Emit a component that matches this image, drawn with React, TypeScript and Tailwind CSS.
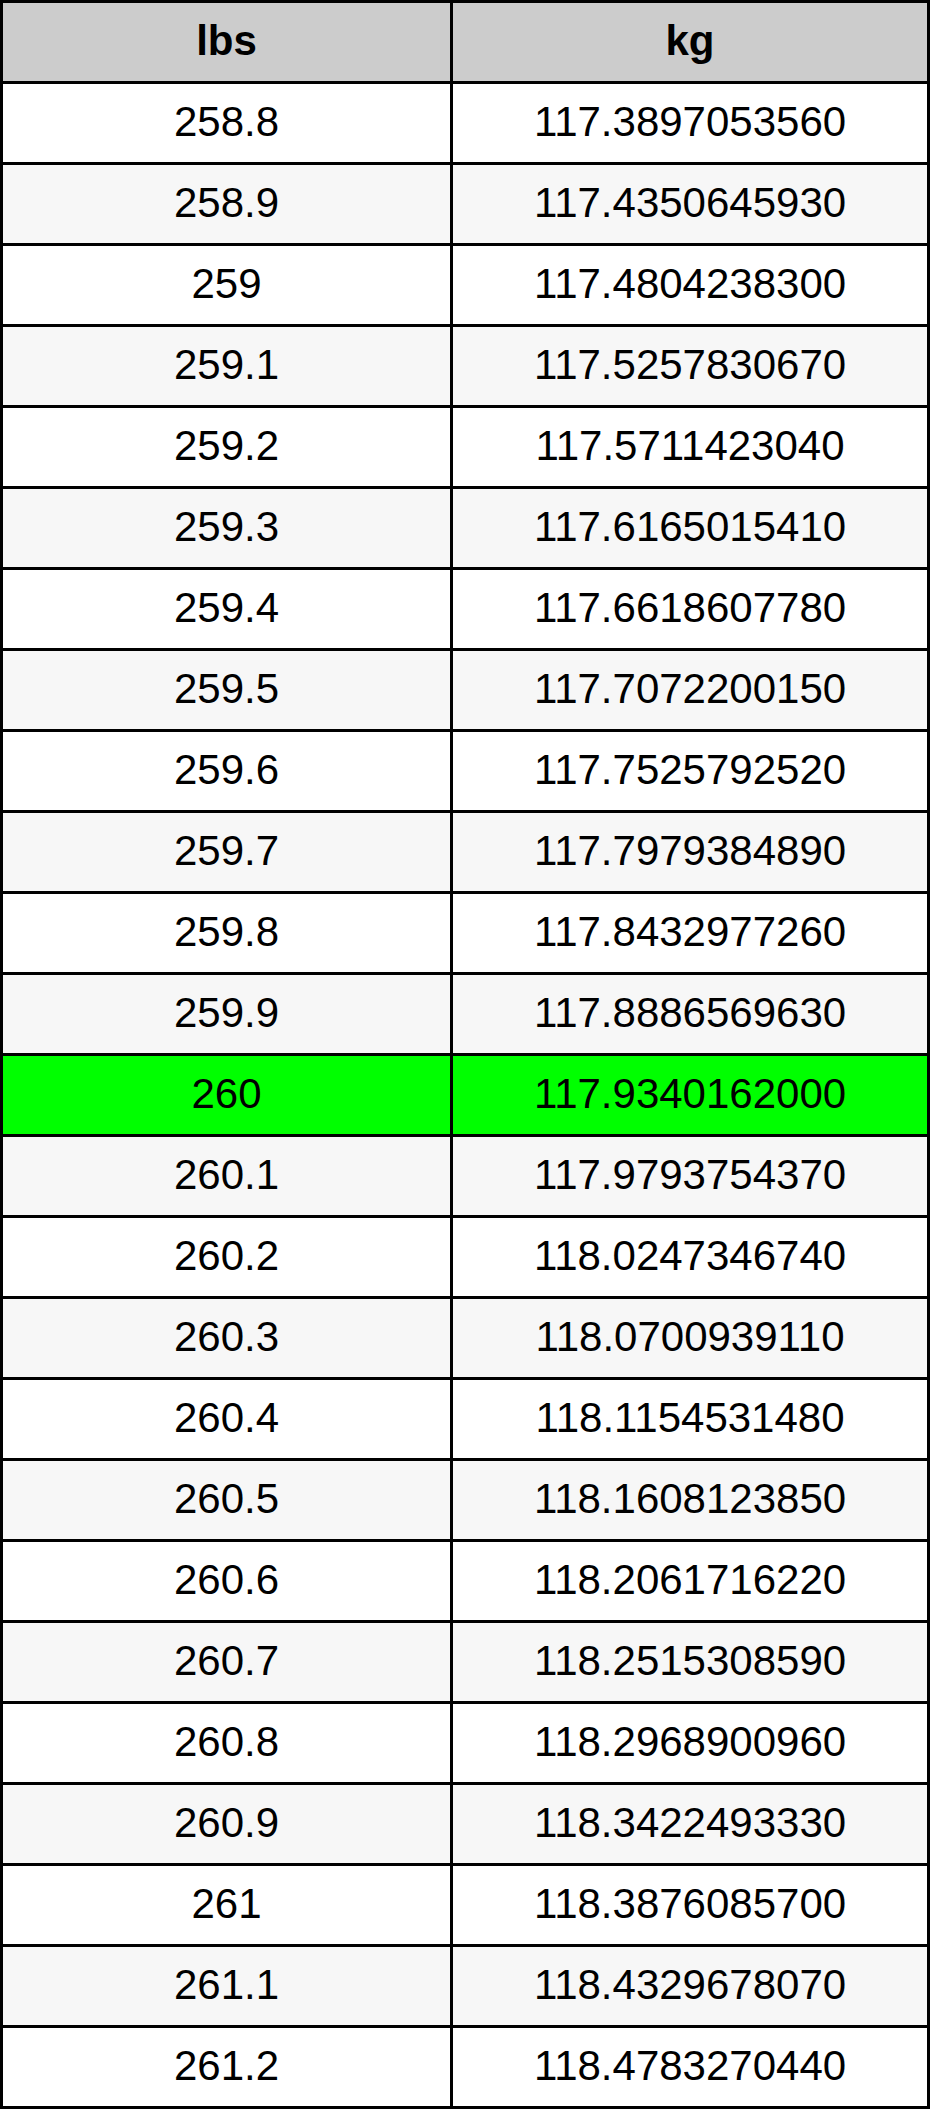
import React from 'react';

type Row = { lbs: string; kg: string };

const ROWS: Row[] = [
  { lbs: '258.8', kg: '117.3897053560' },
  { lbs: '258.9', kg: '117.4350645930' },
  { lbs: '259', kg: '117.4804238300' },
  { lbs: '259.1', kg: '117.5257830670' },
  { lbs: '259.2', kg: '117.5711423040' },
  { lbs: '259.3', kg: '117.6165015410' },
  { lbs: '259.4', kg: '117.6618607780' },
  { lbs: '259.5', kg: '117.7072200150' },
  { lbs: '259.6', kg: '117.7525792520' },
  { lbs: '259.7', kg: '117.7979384890' },
  { lbs: '259.8', kg: '117.8432977260' },
  { lbs: '259.9', kg: '117.8886569630' },
  { lbs: '260', kg: '117.9340162000' },
  { lbs: '260.1', kg: '117.9793754370' },
  { lbs: '260.2', kg: '118.0247346740' },
  { lbs: '260.3', kg: '118.0700939110' },
  { lbs: '260.4', kg: '118.1154531480' },
  { lbs: '260.5', kg: '118.1608123850' },
  { lbs: '260.6', kg: '118.2061716220' },
  { lbs: '260.7', kg: '118.2515308590' },
  { lbs: '260.8', kg: '118.2968900960' },
  { lbs: '260.9', kg: '118.3422493330' },
  { lbs: '261', kg: '118.3876085700' },
  { lbs: '261.1', kg: '118.4329678070' },
  { lbs: '261.2', kg: '118.4783270440' },
];

export default function App() {
  return (
    <div className="min-h-screen bg-white font-['Liberation_Sans',Arial,sans-serif] text-[42px] text-black">
      <div className="w-[930px] border-[3px] border-black">
        {/* 헤더 */}
        <div className="flex h-[78px] bg-[#cccccc] pb-[3px] font-bold">
          <div className="flex w-[447px] items-center justify-center">lbs</div>
          <div className="-mb-[3px] flex flex-1 items-center justify-center border-l-[3px] border-black pb-[3px]">kg</div>
        </div>

        {ROWS.map((r, i) => {
          const bg = r.lbs === '260' ? 'bg-[#00ff00]' : i % 2 === 0 ? 'bg-white' : 'bg-[#f7f7f7]';
          return (
            <div key={r.lbs} className={`flex h-[81px] border-t-[3px] border-black ${bg}`}>
              <div className="flex w-[447px] items-center justify-center pb-[3px]">{r.lbs}</div>
              <div className="flex flex-1 items-center justify-center border-l-[3px] border-black pb-[3px]">{r.kg}</div>
            </div>
          );
        })}
      </div>
    </div>
  );
}
